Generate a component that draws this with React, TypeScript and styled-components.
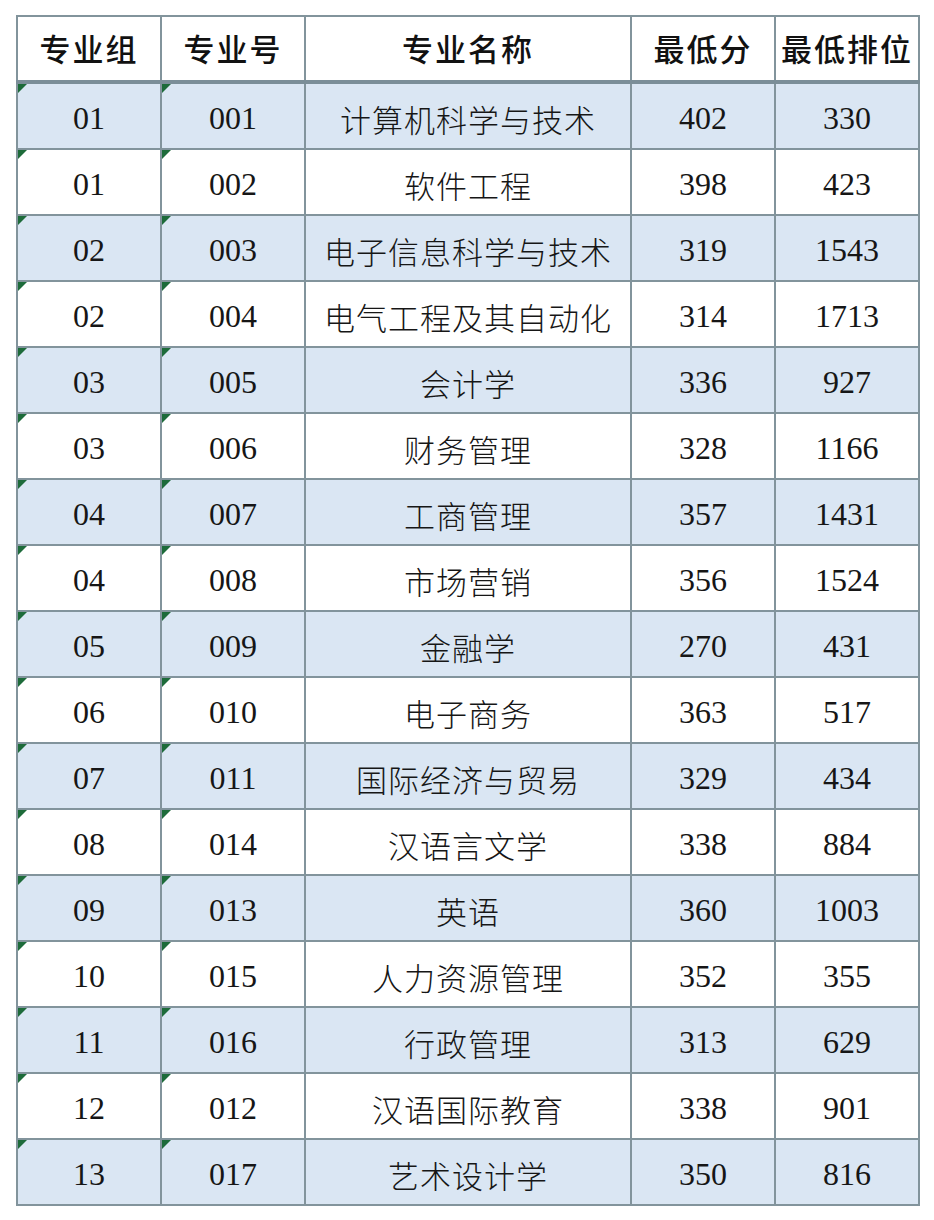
import styled, { createGlobalStyle } from 'styled-components';

const GlobalStyle = createGlobalStyle`
  html, body {
    margin: 0;
    padding: 0;
    background: #ffffff;
  }
`;

const Page = styled.div`
  padding: 15px 16px 16px 16px;
  width: 934px;
  box-sizing: border-box;
`;

const Table = styled.table`
  width: 902px;
  border-collapse: collapse;
  table-layout: fixed;
  border: 2px solid #82949c;
`;

const HeadCell = styled.th`
  height: 61px;
  padding: 0 0 2px 0;
  border: 2px solid #82949c;
  border-bottom: 4px solid #7b8e98;
  background: #ffffff;
  color: #111111;
  font-family: 'Noto Sans CJK SC', sans-serif;
  font-weight: 500;
  font-size: 31px;
  letter-spacing: 2px;
  text-align: center;
  vertical-align: middle;
`;

const Row = styled.tr<{ $shade: boolean }>`
  background: ${(p) => (p.$shade ? '#dae6f3' : '#ffffff')};
`;

const Cell = styled.td<{ $flag?: boolean; $cjk?: boolean }>`
  position: relative;
  height: 60px;
  padding: 4px 0 0 0;
  border: 2px solid #82949c;
  color: #161616;
  text-align: center;
  vertical-align: middle;
  font-family: ${(p) =>
    p.$cjk
      ? "'Noto Sans CJK SC', sans-serif"
      : "'Liberation Serif', 'Times New Roman', serif"};
  font-size: ${(p) => (p.$cjk ? '31px' : '32px')};
  font-weight: ${(p) => (p.$cjk ? 300 : 400)};
  letter-spacing: ${(p) => (p.$cjk ? '1px' : '0')};

  &::before {
    content: '';
    display: ${(p) => (p.$flag ? 'block' : 'none')};
    position: absolute;
    top: 0;
    left: 0;
    width: 0;
    height: 0;
    border-top: 9px solid #1d6b3a;
    border-right: 9px solid transparent;
  }
`;

const cols = ['专业组', '专业号', '专业名称', '最低分', '最低排位'];
const widths = [144, 144, 326, 144, 144];

const rows: [string, string, string, string, string][] = [
  ['01', '001', '计算机科学与技术', '402', '330'],
  ['01', '002', '软件工程', '398', '423'],
  ['02', '003', '电子信息科学与技术', '319', '1543'],
  ['02', '004', '电气工程及其自动化', '314', '1713'],
  ['03', '005', '会计学', '336', '927'],
  ['03', '006', '财务管理', '328', '1166'],
  ['04', '007', '工商管理', '357', '1431'],
  ['04', '008', '市场营销', '356', '1524'],
  ['05', '009', '金融学', '270', '431'],
  ['06', '010', '电子商务', '363', '517'],
  ['07', '011', '国际经济与贸易', '329', '434'],
  ['08', '014', '汉语言文学', '338', '884'],
  ['09', '013', '英语', '360', '1003'],
  ['10', '015', '人力资源管理', '352', '355'],
  ['11', '016', '行政管理', '313', '629'],
  ['12', '012', '汉语国际教育', '338', '901'],
  ['13', '017', '艺术设计学', '350', '816'],
];

export default function App() {
  return (
    <>
      <GlobalStyle />
      <Page>
        <Table>
          <colgroup>
            {widths.map((w, i) => (
              <col key={i} style={{ width: w }} />
            ))}
          </colgroup>
          <thead>
            <tr>
              {cols.map((c) => (
                <HeadCell key={c}>{c}</HeadCell>
              ))}
            </tr>
          </thead>
          <tbody>
            {rows.map((r, i) => (
              <Row key={i} $shade={i % 2 === 0}>
                <Cell $flag>{r[0]}</Cell>
                <Cell $flag>{r[1]}</Cell>
                <Cell $cjk>{r[2]}</Cell>
                <Cell>{r[3]}</Cell>
                <Cell>{r[4]}</Cell>
              </Row>
            ))}
          </tbody>
        </Table>
      </Page>
    </>
  );
}
